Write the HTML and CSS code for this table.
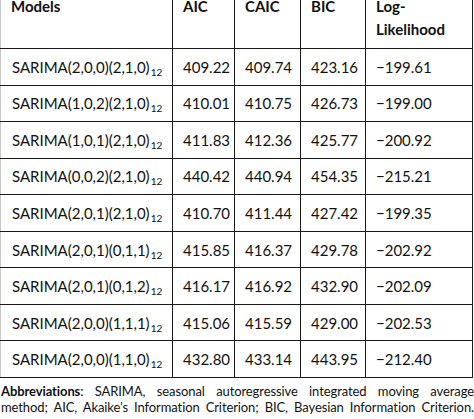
FILE: index.html
```html
<!DOCTYPE html>
<html lang="en">
<head>
<meta charset="utf-8">
<title>SARIMA models</title>
<link rel="stylesheet" href="styles.css">
</head>
<body>
<div class="page">
  <table class="models">
    <colgroup>
      <col class="c-model">
      <col class="c-aic">
      <col class="c-caic">
      <col class="c-bic">
      <col class="c-ll">
    </colgroup>
    <thead>
      <tr>
        <th>Models</th>
        <th>AIC</th>
        <th>CAIC</th>
        <th>BIC</th>
        <th>Log-<br>Likelihood</th>
      </tr>
    </thead>
    <tbody>
      <tr><td>SARIMA(2,0,0)(2,1,0)<sub>12</sub></td><td>409.22</td><td>409.74</td><td>423.16</td><td>&minus;199.61</td></tr>
      <tr><td>SARIMA(1,0,2)(2,1,0)<sub>12</sub></td><td>410.01</td><td>410.75</td><td>426.73</td><td>&minus;199.00</td></tr>
      <tr><td>SARIMA(1,0,1)(2,1,0)<sub>12</sub></td><td>411.83</td><td>412.36</td><td>425.77</td><td>&minus;200.92</td></tr>
      <tr><td>SARIMA(0,0,2)(2,1,0)<sub>12</sub></td><td>440.42</td><td>440.94</td><td>454.35</td><td>&minus;215.21</td></tr>
      <tr><td>SARIMA(2,0,1)(2,1,0)<sub>12</sub></td><td>410.70</td><td>411.44</td><td>427.42</td><td>&minus;199.35</td></tr>
      <tr><td>SARIMA(2,0,1)(0,1,1)<sub>12</sub></td><td>415.85</td><td>416.37</td><td>429.78</td><td>&minus;202.92</td></tr>
      <tr><td>SARIMA(2,0,1)(0,1,2)<sub>12</sub></td><td>416.17</td><td>416.92</td><td>432.90</td><td>&minus;202.09</td></tr>
      <tr><td>SARIMA(2,0,0)(1,1,1)<sub>12</sub></td><td>415.06</td><td>415.59</td><td>429.00</td><td>&minus;202.53</td></tr>
      <tr><td>SARIMA(2,0,0)(1,1,0)<sub>12</sub></td><td>432.80</td><td>433.14</td><td>443.95</td><td>&minus;212.40</td></tr>
    </tbody>
  </table>
  <p class="note">
    <span class="line"><strong>Abbreviations</strong>: SARIMA, seasonal autoregressive integrated moving average</span>
    <span class="line">method; AIC, Akaike&rsquo;s Information Criterion; BIC, Bayesian Information Criterion.</span>
  </p>
</div>
</body>
</html>
```

FILE: styles.css
```css
html, body {
  margin: 0;
  padding: 0;
  background: #fff;
}

.page {
  width: 474px;
  height: 419px;
  overflow: hidden;
  font-family: Lato, "Noto Sans", sans-serif;
  color: #111;
}

.models {
  border-collapse: collapse;
  table-layout: fixed;
  width: 473px;
  margin-top: -6px;
  border-left: 1px solid #c8c8c8;
}

.c-model { width: 172px; }
.c-aic { width: 62px; }
.c-caic { width: 66px; }
.c-bic { width: 65px; }
.c-ll { width: 107px; }

.models th,
.models td {
  border: 1px solid #1a1a1a;
  text-align: left;
  white-space: nowrap;
  font-size: 15px;
}

.models th:first-child,
.models td:first-child {
  border-left-color: #c8c8c8;
}

.models th {
  font-weight: 700;
  vertical-align: top;
  line-height: 23px;
  padding: 0 0 6px 10px;
  height: 54px;
  box-sizing: border-box;
}

.models td {
  vertical-align: middle;
  line-height: 18px;
  height: 36.56px;
  padding: 0 0 0 10px;
  box-sizing: border-box;
}

.models td:first-child {
  padding-left: 11px;
}

.models sub {
  font-size: 10px;
  line-height: 0;
  vertical-align: -3px;
  margin-left: 1px;
}

.note {
  margin: 5px 0 0 1px;
  font-size: 13px;
  line-height: 16px;
  letter-spacing: -0.1px;
}

.note .line {
  display: block;
  text-align: justify;
  text-align-last: justify;
  white-space: nowrap;
}
```
